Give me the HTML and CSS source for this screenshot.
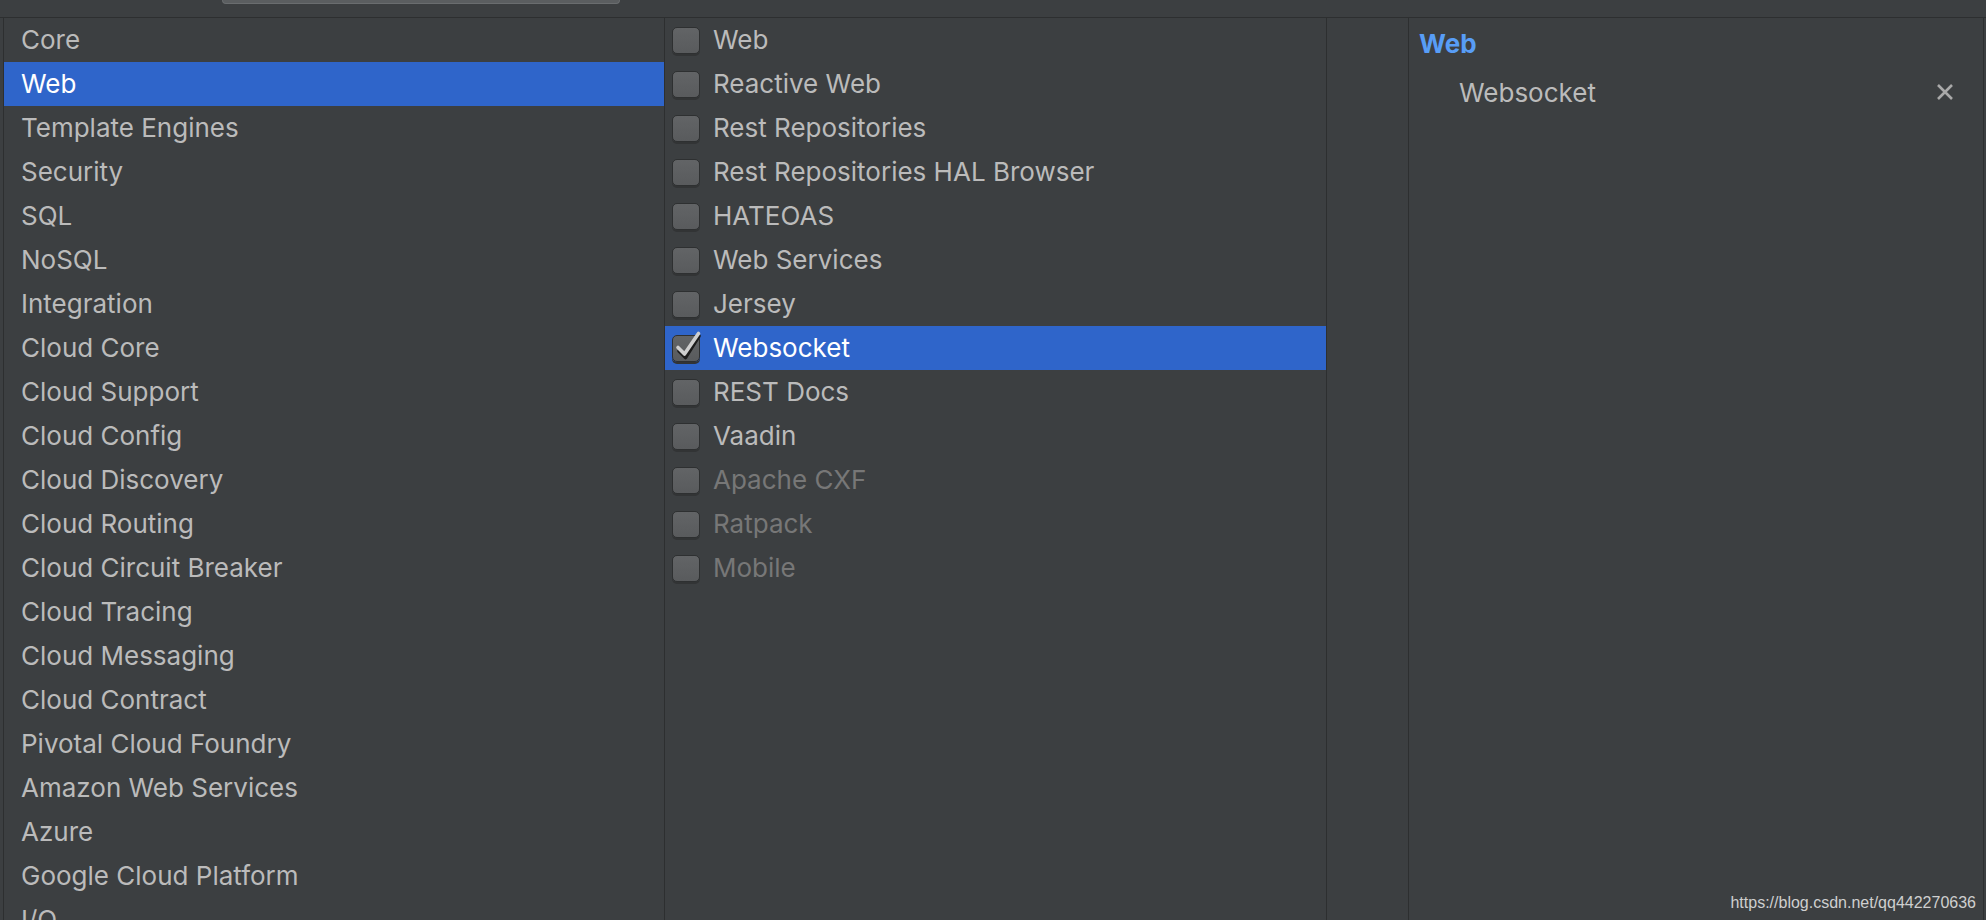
FILE: index.html
```html
<!DOCTYPE html>
<html>
<head>
<meta charset="utf-8">
<link rel="stylesheet" href="styles.css">
</head>
<body>
<div class="top"><div class="field"></div></div>
<div class="main">
  <div class="lists">
    <ul class="list categories">
      <li class="row">Core</li>
      <li class="row sel">Web</li>
      <li class="row">Template Engines</li>
      <li class="row">Security</li>
      <li class="row">SQL</li>
      <li class="row">NoSQL</li>
      <li class="row">Integration</li>
      <li class="row">Cloud Core</li>
      <li class="row">Cloud Support</li>
      <li class="row">Cloud Config</li>
      <li class="row">Cloud Discovery</li>
      <li class="row">Cloud Routing</li>
      <li class="row">Cloud Circuit Breaker</li>
      <li class="row">Cloud Tracing</li>
      <li class="row">Cloud Messaging</li>
      <li class="row">Cloud Contract</li>
      <li class="row">Pivotal Cloud Foundry</li>
      <li class="row">Amazon Web Services</li>
      <li class="row">Azure</li>
      <li class="row">Google Cloud Platform</li>
      <li class="row">I/O</li>
    </ul>
    <ul class="list deps">
      <li class="row dep"><span class="cb"></span><span>Web</span></li>
      <li class="row dep"><span class="cb"></span><span>Reactive Web</span></li>
      <li class="row dep"><span class="cb"></span><span>Rest Repositories</span></li>
      <li class="row dep"><span class="cb"></span><span>Rest Repositories HAL Browser</span></li>
      <li class="row dep"><span class="cb"></span><span>HATEOAS</span></li>
      <li class="row dep"><span class="cb"></span><span>Web Services</span></li>
      <li class="row dep"><span class="cb"></span><span>Jersey</span></li>
      <li class="row dep sel"><span class="cb checked"><svg class="check" viewBox="0 0 28 28" width="28" height="28"><path d="M7 16 L13.5 22.5 L27 1" class="dark"/><path d="M6 12.5 L12.5 19 L26.5 -1.5" class="light"/></svg></span><span>Websocket</span></li>
      <li class="row dep"><span class="cb"></span><span>REST Docs</span></li>
      <li class="row dep"><span class="cb"></span><span>Vaadin</span></li>
      <li class="row dep off"><span class="cb"></span><span>Apache CXF</span></li>
      <li class="row dep off"><span class="cb"></span><span>Ratpack</span></li>
      <li class="row dep off"><span class="cb"></span><span>Mobile</span></li>
    </ul>
  </div>
  <div class="chosen">
    <div class="group">Web</div>
    <div class="item"><span>Websocket</span><svg class="x" viewBox="0 0 18 18" width="18" height="18"><path d="M2 2 L16 16 M16 2 L2 16"/></svg></div>
  </div>
</div>
<div class="watermark">https://blog.csdn.net/qq442270636</div>
</body>
</html>
```

FILE: styles.css
```css
html, body {
  margin: 0;
  padding: 0;
  height: 920px;
  overflow: hidden;
  background: #3c3f41;
  font-family: Inter, "Liberation Sans", sans-serif;
  font-size: 26px;
  letter-spacing: 0;
  color: #bbbbbb;
}

.top {
  height: 17px;
  padding-left: 222px;
  border-bottom: 1px solid #2d2f30;
}

.field {
  width: 396px;
  height: 3px;
  background: #5b5e60;
  border: 1px solid #6a6d6f;
  border-top: none;
  border-radius: 0 0 6px 6px;
}

.main {
  display: flex;
  height: 902px;
  padding-left: 3px;
}

.lists {
  display: flex;
  border-left: 1px solid #2d2f30;
}

.list {
  list-style: none;
  margin: 0;
  padding: 0;
  border-right: 1px solid #2d2f30;
  overflow: hidden;
}

.categories {
  width: 660px;
}

.deps {
  width: 661px;
}

.row {
  height: 44px;
  line-height: 44px;
  padding-left: 17px;
  white-space: nowrap;
}

.row.sel {
  background: #2f65ca;
  color: #ffffff;
}

.dep {
  display: flex;
  align-items: center;
  padding-left: 7px;
  gap: 13px;
}

.dep.off {
  color: #777777;
}

.cb {
  position: relative;
  width: 26px;
  height: 25px;
  border: 1px solid #2e3031;
  border-radius: 5px;
  background: linear-gradient(#626466, #595b5d);
  box-shadow: 0 2px 0 #323435;
  flex: none;
}

.check {
  position: absolute;
  left: -1px;
  top: -1px;
  overflow: visible;
}

.check path {
  fill: none;
  stroke-width: 3.6;
  stroke-linecap: round;
  stroke-linejoin: round;
}

.check .dark {
  stroke: #1c1c1c;
}

.check .light {
  stroke: #cfcfcf;
}

.chosen {
  margin-left: 81px;
  width: 574px;
  border: 1px solid #2d2f30;
  border-top: none;
  border-bottom: none;
  padding-top: 1px;
}

.group {
  height: 50px;
  line-height: 50px;
  padding-left: 10px;
  font-weight: 700;
  color: #589df6;
}

.item {
  display: flex;
  align-items: center;
  justify-content: space-between;
  height: 46px;
  padding-left: 50px;
  padding-right: 29px;
}

.x path {
  stroke: #a9a9a9;
  stroke-width: 2.6;
  fill: none;
}

.watermark {
  position: absolute;
  right: 10px;
  bottom: 8px;
  font-family: "Liberation Sans", Arial, sans-serif;
  font-size: 16px;
  letter-spacing: 0;
  color: #cfcfcf;
}
```
